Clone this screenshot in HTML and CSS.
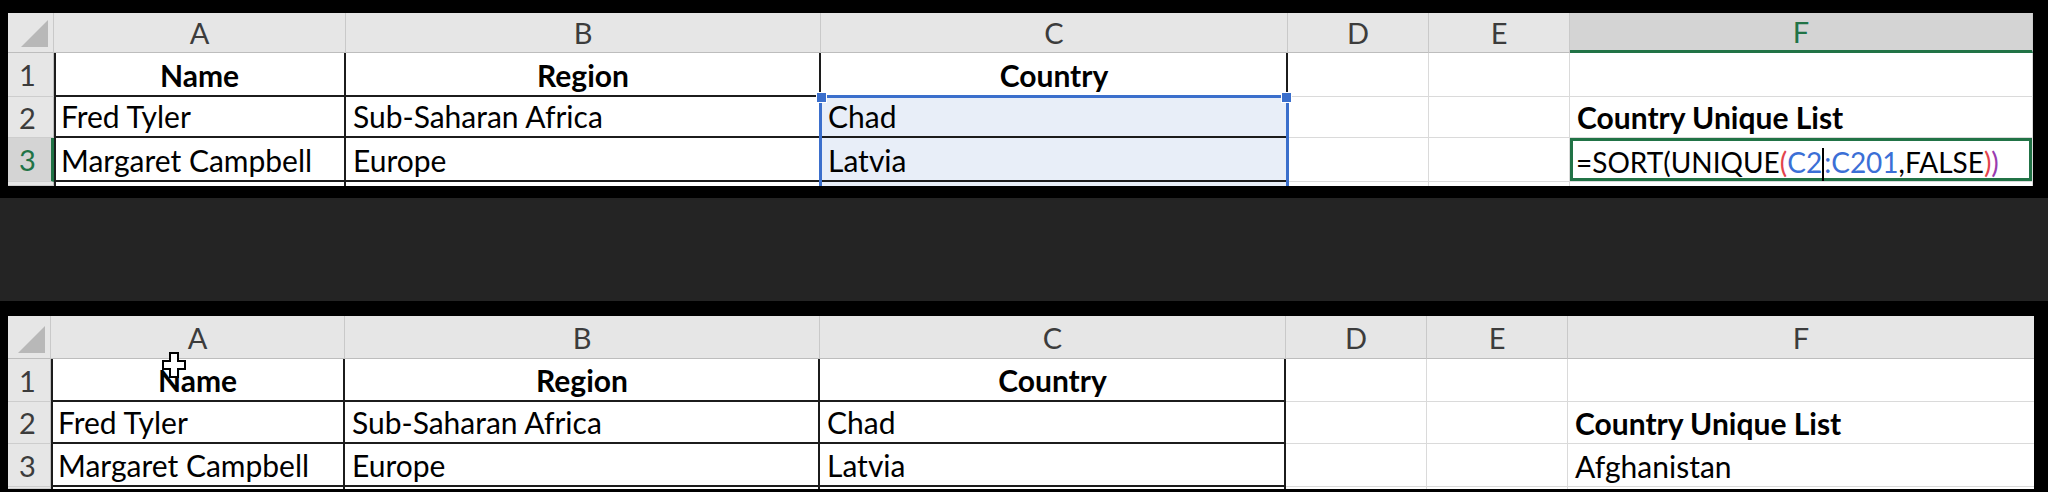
FILE: index.html
```html
<!DOCTYPE html>
<html lang="en">
  <head>
    <meta charset="UTF-8" />
    <title>Country Unique List</title>
    <link rel="stylesheet" href="styles.css">
  </head>
  <body>
    <!-- before: formula being typed -->
    <div class="sheet sheet-top">
      <div class="hd corner"></div>
      <div class="hd">A</div>
      <div class="hd">B</div>
      <div class="hd">C</div>
      <div class="hd">D</div>
      <div class="hd">E</div>
      <div class="hd hd-active">F</div>

      <div class="rh">1</div>
      <div class="c t ta bold center">Name</div>
      <div class="c t bold center">Region</div>
      <div class="c t bold center">Country</div>
      <div class="c"></div>
      <div class="c"></div>
      <div class="c"></div>

      <div class="rh">2</div>
      <div class="c t ta">Fred Tyler</div>
      <div class="c t">Sub-Saharan Africa</div>
      <div class="c t picked first">Chad<div class="range"></div></div>
      <div class="c"></div>
      <div class="c"></div>
      <div class="c bold">Country Unique List</div>

      <div class="rh rh-active">3</div>
      <div class="c t ta">Margaret Campbell</div>
      <div class="c t">Europe</div>
      <div class="c t picked">Latvia</div>
      <div class="c"></div>
      <div class="c"></div>
      <div class="c editing">=SORT(UNIQUE<span class="p1">(</span><span class="ref">C2</span><span class="caret"></span><span class="ref">:C201</span>,FALSE<span class="p1">)</span><span class="p2">)</span></div>

      <div class="rh"></div>
      <div class="c t ta open"></div>
      <div class="c t open"></div>
      <div class="c t open picked"></div>
      <div class="c"></div>
      <div class="c"></div>
      <div class="c"></div>
    </div>

    <div class="divider"></div>

    <!-- after: spilled result -->
    <div class="sheet sheet-bottom">
      <div class="hd corner"></div>
      <div class="hd">A</div>
      <div class="hd">B</div>
      <div class="hd">C</div>
      <div class="hd">D</div>
      <div class="hd">E</div>
      <div class="hd">F</div>

      <div class="rh">1</div>
      <div class="c t ta bold center">Name</div>
      <div class="c t bold center">Region</div>
      <div class="c t bold center">Country</div>
      <div class="c"></div>
      <div class="c"></div>
      <div class="c"></div>

      <div class="rh">2</div>
      <div class="c t ta">Fred Tyler</div>
      <div class="c t">Sub-Saharan Africa</div>
      <div class="c t">Chad</div>
      <div class="c"></div>
      <div class="c"></div>
      <div class="c bold">Country Unique List</div>

      <div class="rh">3</div>
      <div class="c t ta">Margaret Campbell</div>
      <div class="c t">Europe</div>
      <div class="c t">Latvia</div>
      <div class="c"></div>
      <div class="c"></div>
      <div class="c">Afghanistan</div>

      <div class="rh"></div>
      <div class="c t ta open"></div>
      <div class="c t open"></div>
      <div class="c t open"></div>
      <div class="c"></div>
      <div class="c"></div>
      <div class="c"></div>

      <svg class="pointer" width="26" height="28" viewBox="0 0 26 28">
        <path d="M9 2h8v8h7v8h-7v8H9v-8H2v-8h7z" fill="#fff" stroke="#000" stroke-width="2" stroke-linejoin="miter" />
      </svg>
    </div>
  </body>
</html>
```

FILE: styles.css
```css
body {
  margin: 0;
  padding-top: 13px;
  background-color: #000;
  font-family: Lato, "Open Sans", sans-serif;
}
.sheet {
  display: grid;
  position: relative;
  margin-left: 8px;
  background: #fff;
  overflow: hidden;
}
.sheet-top {
  width: 2025px;
  grid-template-columns: 46px 292px 475px 467px 141px 141px 463px;
  grid-template-rows: 40px 44px 41px 44px 4px;
}
.sheet-bottom {
  width: 2026px;
  grid-template-columns: 43px 294px 475px 466px 141px 141px 467px;
  grid-template-rows: 43px 43px 42px 43px 2px;
}
.divider {
  height: 103px;
  margin: 12px 0 15px;
  background: #242424;
}
.c,
.hd,
.rh {
  box-sizing: border-box;
  display: flex;
  overflow: hidden;
  white-space: nowrap;
  line-height: 1;
}
.c {
  align-items: flex-end;
  padding: 0 6px 5px 7px;
  font-size: 30px;
  color: #000;
  border-right: 1px solid #dadada;
  border-bottom: 1px solid #dadada;
}
.hd {
  align-items: center;
  justify-content: center;
  font-size: 29px;
  color: #3c3c3c;
  background: #e6e6e6;
  border-right: 1px solid #c9c9c9;
  border-bottom: 1px solid #bdbdbd;
}
.rh {
  align-items: center;
  padding-left: 11px;
  font-size: 29px;
  color: #3c3c3c;
  background: #e6e6e6;
  border-right: 1px solid #bdbdbd;
  border-bottom: 1px solid #cdcdcd;
}
.corner {
  position: relative;
}
.corner::after {
  content: "";
  position: absolute;
  right: 5px;
  bottom: 5px;
  width: 27px;
  height: 27px;
  background: #b8b8b8;
  clip-path: polygon(100% 0, 100% 100%, 0 100%);
}
.hd-active {
  color: #217346;
  background: #d4d4d4;
  border-bottom: 3px solid #217346;
}
.rh-active {
  color: #217346;
  background: #d4d4d4;
  border-right: 3px solid #217346;
}
.bold {
  font-weight: bold;
}
.center {
  justify-content: center;
}
/* the data table: black borders */
.t {
  border-right: 2px solid #1c1c1c;
  border-bottom: 2px solid #1c1c1c;
}
.ta {
  box-shadow: inset 2px 0 0 #1c1c1c;
}
.open {
  border-bottom: none;
}
.picked {
  background: #e8eef8;
}
.first {
  position: relative;
  overflow: visible;
  z-index: 2;
}
/* C2:C201 reference box */
.range {
  position: absolute;
  top: -2px;
  left: -2px;
  right: -3px;
  height: 200px;
  border: 3px solid #3b6fcc;
  border-bottom: none;
  pointer-events: none;
}
.range::before,
.range::after {
  content: "";
  position: absolute;
  top: -6px;
  width: 9px;
  height: 9px;
  background: #3b6fcc;
  border: 1px solid #fff;
}
.range::before {
  left: -6px;
}
.range::after {
  right: -6px;
}
.editing {
  box-shadow: inset 0 0 0 3px #217346;
  padding-left: 6px;
  font-size: 28px;
}
.ref {
  color: #3b6fd6;
}
.p1 {
  color: #e3434c;
}
.p2 {
  color: #9a3cb0;
}
.caret {
  display: inline-block;
  width: 2px;
  height: 33px;
  margin-bottom: -5px;
  background: #000;
}
.pointer {
  position: absolute;
  left: 153px;
  top: 35px;
}
```
